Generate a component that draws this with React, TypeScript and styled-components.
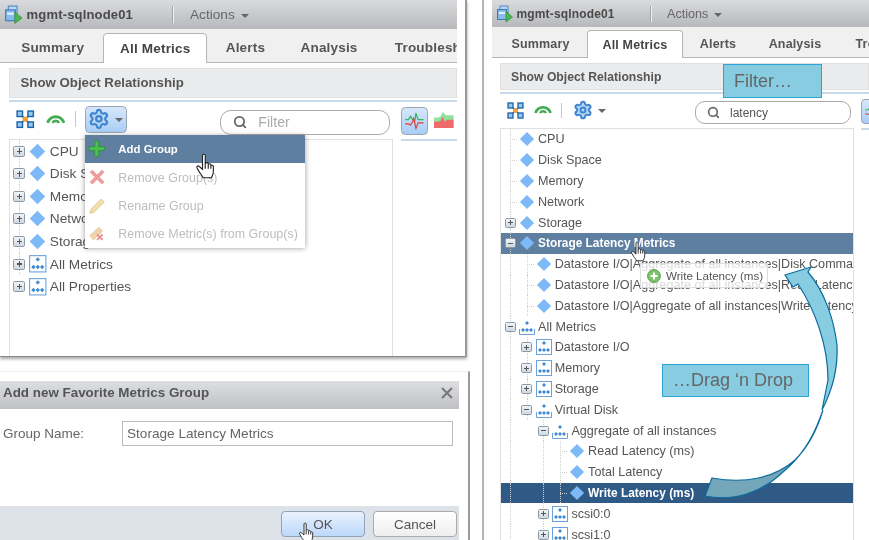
import React from 'react';
import styled, { createGlobalStyle } from 'styled-components';
import { Search, Settings } from 'lucide-react';

const Global = createGlobalStyle`
  html, body { margin: 0; padding: 0; background: #fff; }
  body { font-family: "Liberation Sans", Arial, sans-serif; color: #555; }
`;

const Page = styled.div`
  position: relative; width: 869px; height: 540px; overflow: hidden; display: flex; background: #fff; filter: blur(0.35px);
`;
const LeftColumn = styled.div`
  width: 470px; flex: none; display: flex; flex-direction: column;
`;
const LeftWindow = styled.div`
  width: 467px; height: 357px; flex: none; box-sizing: border-box; border-right: 2px solid #9a9a9a; border-bottom: 1px solid #8a8a8a;
  box-shadow: 0 2px 3px rgba(0,0,0,.35); overflow: hidden;
`;
const RightWindow = styled.div`
  margin-left: 12px; width: 387px; flex: none; box-sizing: border-box; border-left: 2px solid #b5b5b5; padding-left: 8px; height: 540px;
`;
const Pane = styled.div<{ $scale: number; $width: number; $height: number }>`
  position: relative; zoom: ${p => p.$scale}; width: ${p => p.$width}px; height: ${p => p.$height}px; overflow: hidden;
  display: flex; flex-direction: column;
`;
const TitleBar = styled.div`
  height: 27px; flex: none; display: flex; align-items: center; padding-left: 4px; background: linear-gradient(#dadbdd, #b6b8bb);
`;
const ObjectName = styled.span`
  margin-left: 3.5px; font-size: 12px; font-weight: 700; color: #4a4a4a; width: 133.5px; letter-spacing: .15px;
`;
const TitleDivider = styled.span`
  width: 1px; height: 16px; background: #f0f0f0; border-left: 1px solid #a5a5a5;
`;
const ActionsLabel = styled.span`
  margin-left: 15px; font-size: 12.6px; color: #666;
`;
const Caret = styled.span<{ $flush?: boolean }>`
  margin-left: ${p => (p.$flush ? 0 : 6)}px; width: 0; height: 0; border-left: 4px solid transparent; border-right: 4px solid transparent; border-top: 4px solid #666; margin-top: 2px;
`;
const TabBar = styled.div`
  height: 30px; flex: none; display: flex; align-items: flex-end; background: #f0f0f0; border-bottom: 1px solid #b5b5b5; padding-left: 2px; box-sizing: content-box; white-space: nowrap;
`;
const Tab = styled.div<{ $active?: boolean; $w: number }>`
  width: ${p => p.$w}px; flex: none; height: 27px; box-sizing: border-box; display: flex; align-items: center; justify-content: center;
  font-size: 12.5px; font-weight: 700; color: #555; letter-spacing: .15px;
  ${p => p.$active && `background:#fff; border:1px solid #b5b5b5; border-bottom:0; border-radius:4px 4px 0 0; height:28px; margin-bottom:-1px; color:#444;`}
`;
const SectionBand = styled.div`
  margin: 5px 0 0 8px; height: 27px; flex: none; box-sizing: border-box; display: flex; align-items: center; padding-left: 10px; background: #eaebed; border: 1px solid #e0e0e0;
  font-size: 12.2px; font-weight: 700; color: #555;
`;
const BlueRule = styled.div`
  margin: 2px 0 0 8px; height: 2px; flex: none; background: #c8d9ea;
`;
const Toolbar = styled.div`
  position: relative; height: 32px; flex: none; display: flex; align-items: center; padding-left: 15px;
`;
const ToolSpacer = styled.span`
  width: 10px; flex: none;
`;
const ToolDivider = styled.span`
  margin: 0 9px; width: 1px; height: 15px; background: #c8c8c8;
`;
const GearButton = styled.div<{ $open?: boolean }>`
  width: 39px; height: 25px; margin-left: -1px; box-sizing: border-box; display: flex; align-items: center; justify-content: center; gap: 5px; border-radius: 4px;
  ${p => p.$open && `border:1px solid #9aa5b2; background: linear-gradient(#d6e7fb,#a9cdf6);`}
`;
const FilterBox = styled.div`
  position: absolute; left: 203px; top: 7px; width: 156px; height: 23px; box-sizing: border-box; border: 1px solid #aaa; border-radius: 10px; background: #fff;
  display: flex; align-items: center; padding-left: 11px; gap: 10px; font-size: 12px;
`;
const FilterText = styled.span<{ $placeholder?: boolean }>`
  color: ${p => (p.$placeholder ? '#aaa' : '#555')}; font-size: ${p => (p.$placeholder ? 13 : 12)}px;
`;
const ChartButton = styled.div`
  position: absolute; left: 369px; top: 5px; width: 25px; height: 25px; box-sizing: border-box; border: 1px solid #9aa5b2; border-radius: 4px; background: linear-gradient(#d6e7fb,#a9cdf6);
  display: flex; align-items: center; justify-content: center;
`;
const ChartArea = styled.div`
  position: absolute; left: 400px; top: 8px; line-height: 0;
`;
const ChartRule = styled.div`
  position: absolute; left: 369px; top: 128px; right: 0; height: 2px; background: #c8d9ea;
`;
const TreePanel = styled.div`
  margin: 2px 0 0 8px; width: 354px; box-sizing: border-box; flex: 1; border: 1px solid #e0e0e0; border-bottom: 0; overflow: hidden; padding-bottom: 8px;
`;
const Row = styled.div<{ $depth: number; $sel?: 'hover' | 'active' }>`
  position: relative; height: 20.8px; display: flex; align-items: center; box-sizing: border-box; white-space: nowrap;
  padding-left: ${p => 3 + p.$depth * 16.7}px; font-size: 12.6px; color: #555;
  ${p => p.$sel === 'hover' && `background:#5f7fa0; color:#fff; font-weight:700; font-size:11.9px;`}
  ${p => p.$sel === 'active' && `background:#2f5a85; color:#fff; font-weight:700; font-size:11.9px;`}
`;
const Guide = styled.span<{ $col: number }>`
  position: absolute; top: 0; bottom: 0; left: ${p => 9 + p.$col * 16.7}px; border-left: 1px dotted #cfcfcf;
`;
const ToggleCell = styled.span`
  position: relative; width: 12px; height: 100%; flex: none; display: flex; align-items: center; justify-content: center;
`;
const Connector = styled.span`
  position: absolute; left: 6px; top: 50%; width: 7px; border-top: 1px dotted #cfcfcf;
`;
const Toggle = styled.span<{ $open?: boolean }>`
  position: relative; z-index: 1; width: 11px; height: 10px; box-sizing: border-box; border: 1px solid #8d99a4; border-radius: 1.5px; background: linear-gradient(#f0f4f8, #cfd8e1);
  &::before { content: ''; position: absolute; left: 2px; right: 2px; top: 3.5px; height: 1px; background: #555; }
  ${p => !p.$open && `&::after { content:''; position:absolute; top:1.5px; bottom:1.5px; left:4px; width:1px; background:#555; }`}
`;
const IconCell = styled.span`
  width: 18px; height: 18px; flex: none; margin-left: 2px; margin-right: 2px; display: flex; align-items: center; justify-content: center;
`;
const Diamond = styled.span`
  width: 10px; height: 10px; background: #7db8f7; transform: rotate(45deg);
`;
const Menu = styled.div`
  position: absolute; left: 78px; top: 124px; width: 203px; background: #fff; box-shadow: 0 1px 5px rgba(0,0,0,.4); z-index: 3;
`;
const MenuItem = styled.div<{ $active?: boolean }>`
  height: 26px; box-sizing: border-box; display: flex; align-items: center; padding-top: ${p => (p.$active ? 0 : 1)}px;
  color: ${p => (p.$active ? '#fff' : '#bdbdbd')}; font-weight: ${p => (p.$active ? 700 : 400)}; font-size: ${p => (p.$active ? 10.5 : 11.5)}px; background: ${p => (p.$active ? '#5f7fa0' : 'transparent')};
`;
const MenuIcon = styled.span`
  width: 31px; flex: none; display: flex; justify-content: center; padding-right: 9px; box-sizing: border-box;
`;
const Dialog = styled.div`
  margin-top: 14px; width: 470px; height: 169px; box-sizing: border-box; border-right: 2px solid #9a9a9a; border-top: 1px solid #eee; padding: 9px 9px 0 0; flex: none; display: flex; flex-direction: column;
`;
const DialogTitle = styled.div`
  height: 28px; flex: none; box-sizing: border-box; display: flex; align-items: center; justify-content: space-between; padding: 0 5px 5px 3px; background: linear-gradient(#dcdee1, #bfc1c4);
  font-size: 13.4px; font-weight: 700; color: #555;
`;
const CloseIcon = styled.svg`
  display: block;
`;
const FormRow = styled.div`
  display: flex; align-items: center; height: 24px; margin-top: 12px; padding-left: 3px; font-size: 13.5px; color: #666;
`;
const FormLabel = styled.span`
  width: 119px; flex: none;
`;
const FormInput = styled.div`
  width: 331px; height: 25px; box-sizing: border-box; border: 1px solid #bbb; display: flex; align-items: center; padding-left: 4px; font-size: 13.6px; color: #666;
`;
const DialogFooter = styled.div`
  margin-top: auto; height: 34px; flex: none; background: #dde2e8; display: flex; justify-content: flex-end; gap: 8px; padding: 5px 2px 0 0; box-sizing: border-box;
`;
const Button = styled.div<{ $hover?: boolean }>`
  width: 84px; height: 26px; box-sizing: border-box; border-radius: 4px; border: 1px solid ${p => (p.$hover ? '#8fa3ba' : '#aaa')};
  background: ${p => (p.$hover ? 'linear-gradient(#e9f2fd,#bcd8fa)' : 'linear-gradient(#fff,#eee)')};
  display: flex; align-items: center; justify-content: center; font-size: 13.5px; color: #555;
`;
const Callout = styled.div<{ $x: number; $y: number; $w: number; $h: number }>`
  position: absolute; left: ${p => p.$x}px; top: ${p => p.$y}px; width: ${p => p.$w}px; height: ${p => p.$h}px; box-sizing: border-box;
  background: #87cce0; border: 1px solid #2ea3d6; color: #666; font-size: 18px; padding-left: 10px; display: flex; align-items: center; white-space: nowrap; z-index: 3;
`;
const DragGhost = styled.div`
  position: absolute; left: 640px; top: 263px; width: 128px; height: 25px; box-sizing: border-box; border: 1px solid #ddd; background: rgba(255,255,255,.78); display: flex; align-items: center; padding-left: 6px; gap: 5px;
  font-size: 11.6px; color: #555; white-space: nowrap; z-index: 2;
`;
const ArrowArt = styled.svg`
  position: absolute; left: 0; top: 0; z-index: 4; pointer-events: none;
`;
const Cursor = styled.svg<{ $x: number; $y: number }>`
  position: absolute; left: ${p => p.$x}px; top: ${p => p.$y}px; z-index: 5;
`;

const VmIcon = () => (
  <svg width="17" height="18" viewBox="0 0 17 18">
    <rect x="4" y="1" width="8" height="7" fill="#bcd7f2" stroke="#4a88c4" />
    <rect x="1.5" y="4.5" width="9" height="10" fill="#8ab9ea" stroke="#3a78b8" />
    <rect x="3" y="7" width="6" height="2" fill="#e6f0fa" />
    <path d="M10 6.5 L16.5 12 L10 17z" fill="#49b651" stroke="#2f8d3a" strokeWidth=".7" />
  </svg>
);
const NetIcon = () => (
  <svg width="17" height="17" viewBox="0 0 17 17">
    <path d="M3 3 L14 14 M14 3 L3 14" stroke="#2f6fae" strokeWidth="1.5" />
    {[[1, 1], [11, 1], [1, 11], [11, 11]].map(([x, y]) => (
      <rect key={`${x}${y}`} x={x} y={y} width="5" height="5" fill="#9cc6ee" stroke="#1a62a8" strokeWidth="1.3" />
    ))}
    <circle cx="8.5" cy="8.5" r="2.4" fill="#f0a030" />
  </svg>
);
const ArcIcon = () => (
  <svg width="18" height="14" viewBox="0 0 18 14">
    <path d="M1.5 10 A7.8 7.8 0 0 1 16.5 10" fill="none" stroke="#45ab55" strokeWidth="2.6" />
    <path d="M6 10 A3.4 3.4 0 0 1 12 10" fill="none" stroke="#45ab55" strokeWidth="2.4" />
  </svg>
);
const GroupIcon = ({ open }: { open?: boolean }) => (
  <svg width="18" height="18" viewBox="0 0 18 18">
    {open ? <path d="M1.5 11v5.5h15V11" fill="none" stroke="#6aa3dc" /> : <rect x="1.5" y="1.5" width="15" height="15" fill="#fff" stroke="#6aa3dc" />}
    {[[9, 5], [5, 12], [9, 12], [13, 12]].map(([x, y]) => (
      <path key={`${x}${y}`} d={`M${x} ${y - 2}l2 2l-2 2l-2-2z`} fill="#3f8ad4" />
    ))}
  </svg>
);
const WaveIcon = () => (
  <svg width="19" height="17" viewBox="0 0 19 17">
    <path d="M1 7h3l2-3 2 3 2 1 1-7 2 6h5" fill="none" stroke="#38b458" strokeWidth="1.1" />
    <path d="M1 11h3l2 1 2-3 1-3 2 9 2-5h5" fill="none" stroke="#e33a3a" strokeWidth="1.1" />
  </svg>
);
const AreaIcon = () => (
  <svg width="18" height="16" viewBox="0 0 18 16">
    <path d="M0 6h4l2-1 2-4 3 3h7v12H0z" fill="#8fe39a" />
    <path d="M0 10h4l2-1 2-4 2 5 2-2h6v8H0z" fill="#f06a6a" />
  </svg>
);
const PlusIcon = () => (
  <svg width="16" height="16" viewBox="0 0 18 18">
    <path d="M7 1h4v6h6v4h-6v6H7v-6H1V7h6z" fill="#4cc04e" stroke="#2a8f35" strokeWidth=".8" />
  </svg>
);
const CrossIcon = () => (
  <svg width="15" height="15" viewBox="0 0 16 16">
    <path d="M2 2 L14 14 M14 2 L2 14" stroke="#ef9c9c" strokeWidth="3.6" />
  </svg>
);
const PencilIcon = () => (
  <svg width="15" height="15" viewBox="0 0 16 16">
    <path d="M1 15l1-4L12 1l3 3L5 14z" fill="#f1e0ae" stroke="#d9c28a" strokeWidth=".8" />
  </svg>
);
const RulerIcon = () => (
  <svg width="15" height="14" viewBox="0 0 18 16">
    <path d="M1 10L11 1l4 4L5 15z" fill="#f0d3a8" stroke="#dbb98a" strokeWidth=".7" />
    <path d="M9 9l6 6M15 9l-6 6" stroke="#ee8f8f" strokeWidth="2" />
  </svg>
);
const AddBadge = () => (
  <svg width="14" height="14" viewBox="0 0 14 14">
    <circle cx="7" cy="7" r="6.4" fill="#7ac36a" stroke="#5aa04e" />
    <path d="M3.5 7h7M7 3.5v7" stroke="#fff" strokeWidth="2" />
  </svg>
);
const HAND = 'M6 2c0-1.3 2.2-1.3 2.2 0v6.5c.3-1.2 2.4-1 2.4.2v.6c.4-1 2.1-.9 2.1.3v.7c.5-.8 2-.6 2 .5v4c0 2-1 3.5-1.5 5H6.5c-.5-1.5-2-3-3-4.5L1.6 12c-.7-1.2.8-2.2 1.8-1.2L6 13zM8.2 8.5v4M10.6 9.3v3.2M12.7 10.3v2.2';
const Hand = ({ x, y, s = 1 }: { x: number; y: number; s?: number }) => (
  <Cursor $x={x} $y={y} width={17 * s} height={21 * s} viewBox="0 0 17 21">
    <path d={HAND} fill="#fff" stroke="#222" strokeWidth=".9" />
  </Cursor>
);

type Node = { label: string; depth: number; kind: 'leaf' | 'group'; toggle?: 'plus' | 'minus'; sel?: 'hover' | 'active'; guides: number[] };

const leftTree: Node[] = [
  { label: 'CPU', depth: 0, kind: 'leaf', toggle: 'plus', guides: [0] },
  { label: 'Disk Space', depth: 0, kind: 'leaf', toggle: 'plus', guides: [0] },
  { label: 'Memory', depth: 0, kind: 'leaf', toggle: 'plus', guides: [0] },
  { label: 'Network', depth: 0, kind: 'leaf', toggle: 'plus', guides: [0] },
  { label: 'Storage', depth: 0, kind: 'leaf', toggle: 'plus', guides: [0] },
  { label: 'All Metrics', depth: 0, kind: 'group', toggle: 'plus', guides: [0] },
  { label: 'All Properties', depth: 0, kind: 'group', toggle: 'plus', guides: [] },
];
const rightTree: Node[] = [
  { label: 'CPU', depth: 0, kind: 'leaf', guides: [0] },
  { label: 'Disk Space', depth: 0, kind: 'leaf', guides: [0] },
  { label: 'Memory', depth: 0, kind: 'leaf', guides: [0] },
  { label: 'Network', depth: 0, kind: 'leaf', guides: [0] },
  { label: 'Storage', depth: 0, kind: 'leaf', toggle: 'plus', guides: [0] },
  { label: 'Storage Latency Metrics', depth: 0, kind: 'leaf', toggle: 'minus', sel: 'hover', guides: [0] },
  { label: 'Datastore I/O|Aggregate of all instances|Disk Command Latency (ms)', depth: 1, kind: 'leaf', guides: [0, 1] },
  { label: 'Datastore I/O|Aggregate of all instances|Read Latency (ms)', depth: 1, kind: 'leaf', guides: [0, 1] },
  { label: 'Datastore I/O|Aggregate of all instances|Write Latency (ms)', depth: 1, kind: 'leaf', guides: [0, 1] },
  { label: 'All Metrics', depth: 0, kind: 'group', toggle: 'minus', guides: [0] },
  { label: 'Datastore I/O', depth: 1, kind: 'group', toggle: 'plus', guides: [0, 1] },
  { label: 'Memory', depth: 1, kind: 'group', toggle: 'plus', guides: [0, 1] },
  { label: 'Storage', depth: 1, kind: 'group', toggle: 'plus', guides: [0, 1] },
  { label: 'Virtual Disk', depth: 1, kind: 'group', toggle: 'minus', guides: [0, 1] },
  { label: 'Aggregate of all instances', depth: 2, kind: 'group', toggle: 'minus', guides: [0, 2] },
  { label: 'Read Latency (ms)', depth: 3, kind: 'leaf', guides: [0, 2, 3] },
  { label: 'Total Latency', depth: 3, kind: 'leaf', guides: [0, 2, 3] },
  { label: 'Write Latency (ms)', depth: 3, kind: 'leaf', sel: 'active', guides: [0, 2, 3] },
  { label: 'scsi0:0', depth: 2, kind: 'group', toggle: 'plus', guides: [0, 2] },
  { label: 'scsi1:0', depth: 2, kind: 'group', toggle: 'plus', guides: [0, 2] },
];

const TreeRow = ({ node }: { node: Node }) => (
  <Row $depth={node.depth} $sel={node.sel}>
    {node.guides.map(g => <Guide key={g} $col={g} />)}
    <ToggleCell>
      {node.toggle ? <Toggle $open={node.toggle === 'minus'} /> : <Connector />}
    </ToggleCell>
    <IconCell>
      {node.kind === 'leaf' ? <Diamond /> : <GroupIcon open={node.toggle === 'minus'} />}
    </IconCell>
    <span>{node.label}</span>
  </Row>
);

const WindowPane = ({ scale, width, height, filter, gearOpen, tree, children }: {
  scale: number; width: number; height: number; filter: string; gearOpen?: boolean; tree: Node[]; children?: React.ReactNode;
}) => (
  <Pane $scale={scale} $width={width} $height={height}>
    <TitleBar>
      <VmIcon />
      <ObjectName>mgmt-sqlnode01</ObjectName>
      <TitleDivider />
      <ActionsLabel>Actions</ActionsLabel>
      <Caret />
    </TitleBar>
    <TabBar>
      <Tab $w={93}>Summary</Tab>
      <Tab $w={96} $active>All Metrics</Tab>
      <Tab $w={70}>Alerts</Tab>
      <Tab $w={84}>Analysis</Tab>
      <Tab $w={118}>Troubleshoot</Tab>
    </TabBar>
    <SectionBand>Show Object Relationship</SectionBand>
    <BlueRule />
    <Toolbar>
      <NetIcon />
      <ToolSpacer />
      <ArcIcon />
      <ToolDivider />
      <GearButton $open={gearOpen}>
        <Settings size={20} color="#3d86cf" fill="#b9d6f5" strokeWidth={2.4} />
        <Caret $flush />
      </GearButton>
      <FilterBox>
        <Search size={13} color="#666" strokeWidth={3} />
        <FilterText $placeholder={!filter}>{filter || 'Filter'}</FilterText>
      </FilterBox>
      <ChartButton><WaveIcon /></ChartButton>
      <ChartArea><AreaIcon /></ChartArea>
    </Toolbar>
    <ChartRule />
    <TreePanel>
      {tree.map((n, i) => <TreeRow key={i} node={n} />)}
    </TreePanel>
    {children}
  </Pane>
);

export default function App() {
  return (
    <>
      <Global />
      <Page>
        <LeftColumn>
          <LeftWindow>
            <WindowPane scale={1.086} width={421} height={328} filter="" gearOpen tree={leftTree}>
              <Menu>
                <MenuItem $active><MenuIcon><PlusIcon /></MenuIcon>Add Group</MenuItem>
                <MenuItem><MenuIcon><CrossIcon /></MenuIcon>Remove Group(s)</MenuItem>
                <MenuItem><MenuIcon><PencilIcon /></MenuIcon>Rename Group</MenuItem>
                <MenuItem><MenuIcon><RulerIcon /></MenuIcon>Remove Metric(s) from Group(s)</MenuItem>
              </Menu>
            </WindowPane>
          </LeftWindow>
          <Dialog>
            <DialogTitle>
              Add new Favorite Metrics Group
              <CloseIcon width="14" height="14" viewBox="0 0 14 14"><path d="M2 2l10 10M12 2L2 12" stroke="#777" strokeWidth="2" /></CloseIcon>
            </DialogTitle>
            <FormRow>
              <FormLabel>Group Name:</FormLabel>
              <FormInput>Storage Latency Metrics</FormInput>
            </FormRow>
            <DialogFooter>
              <Button $hover>OK</Button>
              <Button>Cancel</Button>
            </DialogFooter>
          </Dialog>
        </LeftColumn>
        <RightWindow>
          <WindowPane scale={1} width={377} height={540} filter="latency" tree={rightTree} />
        </RightWindow>

        <Callout $x={723} $y={64} $w={99} $h={34}>Filter…</Callout>
        <Callout $x={662} $y={364} $w={147} $h={33}>…Drag ‘n Drop</Callout>
        <DragGhost><AddBadge />Write Latency (ms)</DragGhost>
        <ArrowArt width="869" height="540" viewBox="0 0 869 540">
          <path d="M712 478 C 745 484 775 478 795 460 C 808 447 817 430 823 410 L 820 418 C 812 440 800 458 783 472 C 762 492 735 502 705 496 Z" fill="#72a6b8" stroke="#0b6c9e" strokeWidth="1.2" />
          <path d="M811 267 L785 275 L793 287 L798 284 C 815 310 828 345 828 380 L 822 410 C 835 385 838 365 837 345 C 834 320 825 292 808 272 Z" fill="#87cce0" stroke="#0b6c9e" strokeWidth="1.2" />
        </ArrowArt>
        <Hand x={195} y={153} s={1.25} />
        <Hand x={630} y={241} s={1} />
        <Hand x={298} y={522} s={1} />
      </Page>
    </>
  );
}
